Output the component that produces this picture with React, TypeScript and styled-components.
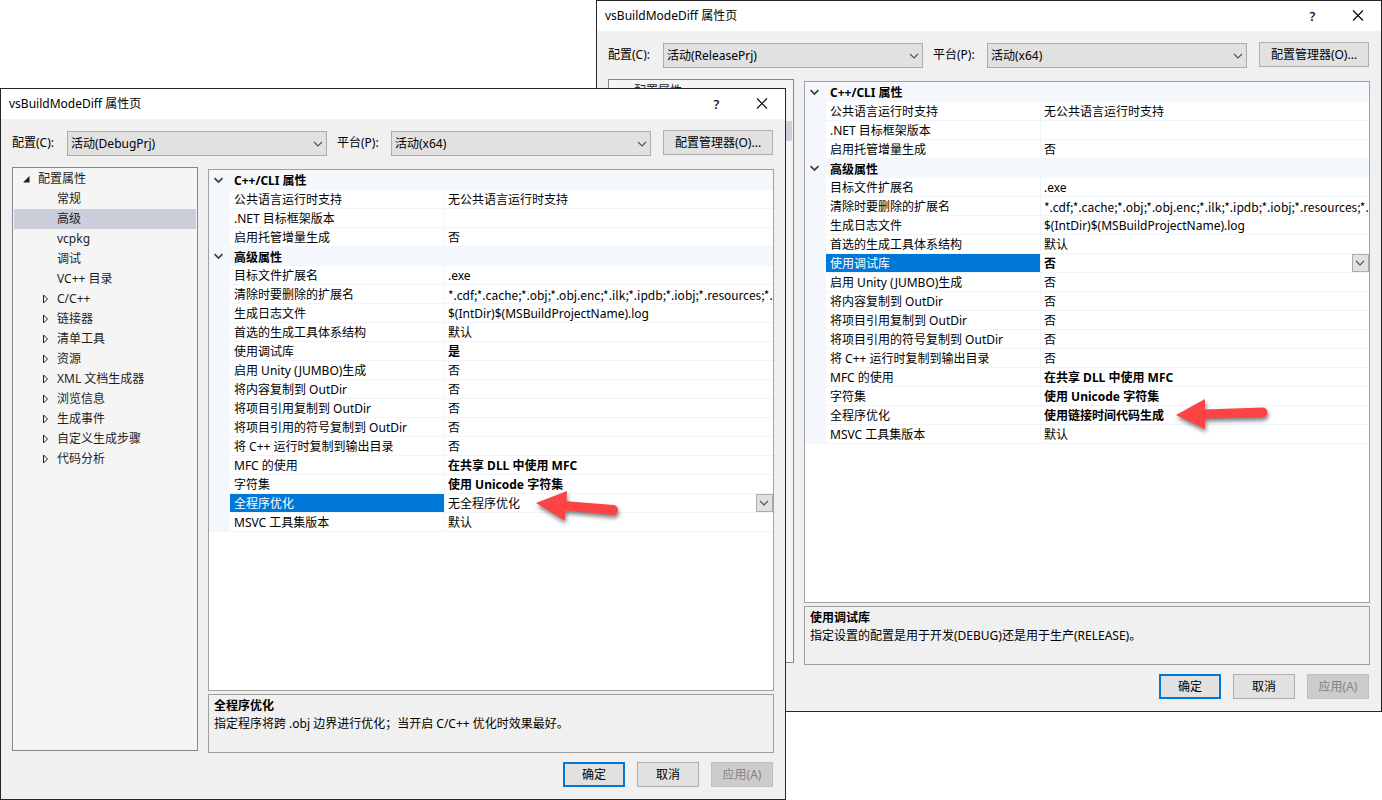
import React, { useId } from "react";
import styled, { createGlobalStyle, css } from "styled-components";

const GlobalStyle = createGlobalStyle`
  * { box-sizing: border-box; }
  body {
    margin: 0;
    background: #ffffff;
    color: #000000;
    font: 12px/18px "Noto Sans", "Noto Sans CJK SC", sans-serif;
  }
  button, select { font: inherit; color: inherit; }
`;

const Desktop = styled.div`
  display: grid;
  min-height: 100vh;
  align-items: start;
`;

const Dialog = styled.section<{ $front?: boolean }>`
  grid-area: 1 / 1;
  width: calc(50% + 95px);
  min-width: 600px;
  justify-self: ${(p) => (p.$front ? "start" : "end")};
  margin-top: ${(p) => (p.$front ? 88 : 0)}px;
  border: 1px solid #262626;
  background: #f0f0f0;
`;

const TitleBar = styled.header`
  display: flex;
  height: 30px;
  align-items: center;
  padding: 0 1px 0 8px;
  background: #ffffff;
`;

const Title = styled.h1`
  flex: 1;
  margin: 0;
  font-size: 12px;
  font-weight: 400;
`;

const TitleButton = styled.button`
  display: grid;
  place-items: center;
  width: 45px;
  height: 30px;
  padding: 0;
  border: 0;
  background: transparent;
  font-size: 13px;
  font-weight: 500;
`;

const Toolbar = styled.div`
  display: flex;
  align-items: center;
  padding: 11px 12px 12px 11px;
`;

const FieldLabel = styled.label`
  flex: none;
  width: 55px;
`;

const PlatformLabel = styled(FieldLabel)`
  width: 54px;
  margin-left: 10px;
`;

const Combo = styled.div`
  display: grid;
  flex: 1;
  min-width: 0;
  margin-top: 1px;
  margin-bottom: -1px;
  align-items: center;
`;

const ComboSelect = styled.select`
  grid-area: 1 / 1;
  width: 100%;
  height: 25px;
  padding: 0 20px 0 3px;
  appearance: none;
  border: 1px solid #acacac;
  border-radius: 0;
  background: #e1e1e1;
`;

const ComboIcon = styled.span`
  display: grid;
  grid-area: 1 / 1;
  justify-self: end;
  margin-right: 3px;
  pointer-events: none;
`;

const PushButton = styled.button<{ $kind?: "default" | "wide" }>`
  width: ${(p) => (p.$kind === "wide" ? 110 : 62)}px;
  height: 25px;
  padding: 0;
  border: 1px solid #adadad;
  background: #e1e1e1;
  ${(p) => p.$kind === "wide" && css`margin-left: 12px;`}
  ${(p) => p.$kind === "default" && css`border: 2px solid #0078d7;`}
  &:disabled {
    border-color: #bfbfbf;
    background: #cccccc;
    color: #838383;
  }
`;

const Main = styled.main`
  display: flex;
  gap: 10px;
  padding: 0 11px;
`;

const TreePanel = styled.ul`
  flex: none;
  width: 186px;
  margin: 0 0 2px;
  padding: 1px;
  border: 1px solid #828790;
  background: #f5f5f5;
  color: #1e1e1e;
  list-style: none;
`;

const TreeItem = styled.li<{ $root?: boolean; $selected?: boolean }>`
  display: grid;
  grid-template-columns: ${(p) => (p.$root ? 16 : 15)}px 1fr;
  align-items: center;
  height: 20px;
  padding-left: ${(p) => (p.$root ? 8 : 28)}px;
  background: ${(p) => (p.$selected ? "#cccedb" : "transparent")};
`;

const TreeText = styled.span`
  grid-column: 2;
`;

const Details = styled.div`
  display: flex;
  flex: 1;
  flex-direction: column;
  gap: 3px;
  min-width: 0;
  margin-top: 2px;
`;

const PropertyFrame = styled.div`
  min-height: 522px;
  overflow: hidden;
  border: 1px solid #a0a0a0;
  background: #ffffff;
`;

const PropertyTable = styled.table`
  width: 100%;
  table-layout: fixed;
  border-collapse: separate;
  border-spacing: 0;
  line-height: 17px;
  text-align: left;
`;

const GutterCol = styled.col`width: 21px;`;
const NameCol = styled.col`width: 214px;`;

const Gutter = styled.td`
  padding: 0 0 0 5px;
  background: #f4f7fc;
`;

const GroupRow = styled.tr<{ $first?: boolean }>`
  height: ${(p) => (p.$first ? 20 : 19)}px;
`;

const GroupHead = styled.th`
  padding: 1px 0 0 4px;
  background: #f4f7fc;
  font-weight: 700;
`;

const NameCell = styled.th<{ $active: boolean }>`
  height: 19px;
  padding: 1px 0 0 4px;
  border-bottom: 1px solid #f0f5fb;
  background: ${(p) => (p.$active ? "#0078d7" : "#ffffff")};
  background-clip: padding-box;
  color: ${(p) => (p.$active ? "#ffffff" : "#000000")};
  font-weight: 400;
  white-space: nowrap;
`;

const ValueCell = styled.td<{ $strong: boolean }>`
  position: relative;
  height: 19px;
  padding: 0 0 0 3px;
  border-bottom: 1px solid #f0f5fb;
  border-left: 1px solid #f0f5fb;
  font-weight: ${(p) => (p.$strong ? 700 : 400)};
  white-space: nowrap;
`;

const ValueText = styled.div`
  overflow: hidden;
  height: 18px;
  padding-top: 1px;
`;

const PatternText = styled(ValueText)`
  font-family: "Noto Sans CJK SC", sans-serif;
`;

const CellEditor = styled.div`
  display: grid;
  align-items: center;
`;

const CellSelect = styled.select`
  grid-area: 1 / 1;
  width: 100%;
  height: 18px;
  padding: 1px 0 0;
  appearance: none;
  border: 0;
  background: transparent;
`;

const CellDrop = styled.span`
  display: grid;
  grid-area: 1 / 1;
  justify-self: end;
  place-items: center;
  width: 17px;
  height: 18px;
  border: 1px solid #acacac;
  background: #e1e1e1;
  pointer-events: none;
`;

const Marker = styled.svg<{ $left: number; $top: number }>`
  position: absolute;
  z-index: 1;
  top: ${(p) => p.$top}px;
  left: ${(p) => p.$left}px;
  overflow: visible;
  filter: drop-shadow(1px 3px 2px rgba(0, 0, 0, 0.5));
  pointer-events: none;
`;

const Description = styled.div`
  min-height: 59px;
  padding: 2px 5px;
  border: 1px solid #a0a0a0;
`;

const DescriptionTitle = styled.h2`
  margin: 0;
  font-size: 12px;
  font-weight: 700;
`;

const DescriptionText = styled.p`
  margin: 0;
`;

const Footer = styled.footer`
  display: flex;
  justify-content: flex-end;
  gap: 12px;
  padding: 9px 12px 12px;
`;

const ComboChevron = () => (
  <svg width="11" height="8" viewBox="0 0 11 8" fill="none" stroke="#505050" strokeWidth="1.1">
    <path d="M1 2 L5 6 L9 2" />
  </svg>
);

const GroupChevronSvg = styled.svg`
  display: block;
`;

const GroupChevron = () => (
  <GroupChevronSvg width="9" height="7" viewBox="0 0 9 7" fill="none" stroke="#3c3c3c" strokeWidth="1.7">
    <path d="M0.6 1.2 L4.5 5 L8.4 1.2" />
  </GroupChevronSvg>
);

const CloseIcon = () => (
  <svg width="12" height="12" viewBox="0 0 12 12" fill="none" stroke="#000" strokeWidth="1.1">
    <path d="M1 0.5 L11 10.5 M11 0.5 L1 10.5" />
  </svg>
);

const OpenNode = () => (
  <svg width="8" height="8" viewBox="0 0 8 8">
    <path d="M7.5 1 V7.5 H1 Z" fill="#1e1e1e" />
  </svg>
);

const ClosedNode = () => (
  <svg width="8" height="10" viewBox="0 0 8 10" fill="none" stroke="#1e1e1e">
    <path d="M1.5 1 V9 L5.5 5 Z" />
  </svg>
);

type TreeNode = { text: string; branch?: boolean };

const tree: TreeNode[] = [
  { text: "常规" },
  { text: "高级" },
  { text: "vcpkg" },
  { text: "调试" },
  { text: "VC++ 目录" },
  { text: "C/C++", branch: true },
  { text: "链接器", branch: true },
  { text: "清单工具", branch: true },
  { text: "资源", branch: true },
  { text: "XML 文档生成器", branch: true },
  { text: "浏览信息", branch: true },
  { text: "生成事件", branch: true },
  { text: "自定义生成步骤", branch: true },
  { text: "代码分析", branch: true },
];

type Property = { name: string; value: string; strong?: boolean };

const cliProperties: Property[] = [
  { name: "公共语言运行时支持", value: "无公共语言运行时支持" },
  { name: ".NET 目标框架版本", value: "" },
  { name: "启用托管增量生成", value: "否" },
];

const advancedProperties = (debugLibs: string, optimization: Property): Property[] => [
  { name: "目标文件扩展名", value: ".exe" },
  { name: "清除时要删除的扩展名", value: "*.cdf;*.cache;*.obj;*.obj.enc;*.ilk;*.ipdb;*.iobj;*.resources;*." },
  { name: "生成日志文件", value: "$(IntDir)$(MSBuildProjectName).log" },
  { name: "首选的生成工具体系结构", value: "默认" },
  { name: "使用调试库", value: debugLibs, strong: true },
  { name: "启用 Unity (JUMBO)生成", value: "否" },
  { name: "将内容复制到 OutDir", value: "否" },
  { name: "将项目引用复制到 OutDir", value: "否" },
  { name: "将项目引用的符号复制到 OutDir", value: "否" },
  { name: "将 C++ 运行时复制到输出目录", value: "否" },
  { name: "MFC 的使用", value: "在共享 DLL 中使用 MFC", strong: true },
  { name: "字符集", value: "使用 Unicode 字符集", strong: true },
  optimization,
  { name: "MSVC 工具集版本", value: "默认" },
];

type DialogProps = {
  front?: boolean;
  configuration: string;
  properties: Property[];
  active: string;
  description: string;
  marker: React.ReactNode;
};

function PropertyRow({ item, active, marker }: { item: Property; active: boolean; marker?: React.ReactNode }) {
  const Text = item.value.startsWith("*") ? PatternText : ValueText;
  return (
    <tr>
      <Gutter />
      <NameCell scope="row" $active={active}>{item.name}</NameCell>
      <ValueCell $strong={!!item.strong}>
        {active ? (
          <CellEditor>
            <CellSelect aria-label={item.name} defaultValue={item.value}>
              <option>{item.value}</option>
            </CellSelect>
            <CellDrop><ComboChevron /></CellDrop>
          </CellEditor>
        ) : (
          <Text>{item.value}</Text>
        )}
        {marker}
      </ValueCell>
    </tr>
  );
}

function PropertyDialog({ front, configuration, properties, active, description, marker }: DialogProps) {
  const id = useId();
  return (
    <Dialog $front={front}>
      <TitleBar>
        <Title>vsBuildModeDiff 属性页</Title>
        <TitleButton>?</TitleButton>
        <TitleButton aria-label="关闭"><CloseIcon /></TitleButton>
      </TitleBar>
      <Toolbar>
        <FieldLabel htmlFor={`${id}-config`}>配置(C):</FieldLabel>
        <Combo>
          <ComboSelect id={`${id}-config`}><option>{configuration}</option></ComboSelect>
          <ComboIcon><ComboChevron /></ComboIcon>
        </Combo>
        <PlatformLabel htmlFor={`${id}-platform`}>平台(P):</PlatformLabel>
        <Combo>
          <ComboSelect id={`${id}-platform`}><option>活动(x64)</option></ComboSelect>
          <ComboIcon><ComboChevron /></ComboIcon>
        </Combo>
        <PushButton $kind="wide">配置管理器(O)...</PushButton>
      </Toolbar>
      <Main>
        <TreePanel>
          <TreeItem $root><OpenNode /><TreeText>配置属性</TreeText></TreeItem>
          {tree.map((node) => (
            <TreeItem key={node.text} $selected={node.text === "高级"}>
              {node.branch && <ClosedNode />}
              <TreeText>{node.text}</TreeText>
            </TreeItem>
          ))}
        </TreePanel>
        <Details>
          <PropertyFrame>
            <PropertyTable>
              <colgroup><GutterCol /><NameCol /><col /></colgroup>
              <tbody>
                <GroupRow $first>
                  <Gutter><GroupChevron /></Gutter>
                  <GroupHead colSpan={2}>C++/CLI 属性</GroupHead>
                </GroupRow>
                {cliProperties.map((item) => (
                  <PropertyRow key={item.name} item={item} active={false} />
                ))}
                <GroupRow>
                  <Gutter><GroupChevron /></Gutter>
                  <GroupHead colSpan={2}>高级属性</GroupHead>
                </GroupRow>
                {properties.map((item) => (
                  <PropertyRow
                    key={item.name}
                    item={item}
                    active={item.name === active}
                    marker={item.name === "全程序优化" ? marker : undefined}
                  />
                ))}
              </tbody>
            </PropertyTable>
          </PropertyFrame>
          <Description>
            <DescriptionTitle>{active}</DescriptionTitle>
            <DescriptionText>{description}</DescriptionText>
          </Description>
        </Details>
      </Main>
      <Footer>
        <PushButton $kind="default">确定</PushButton>
        <PushButton>取消</PushButton>
        <PushButton disabled>应用(A)</PushButton>
      </Footer>
    </Dialog>
  );
}

export default function App() {
  return (
    <>
      <GlobalStyle />
      <Desktop>
        <PropertyDialog
          configuration="活动(ReleasePrj)"
          properties={advancedProperties("否", { name: "全程序优化", value: "使用链接时间代码生成", strong: true })}
          active="使用调试库"
          description="指定设置的配置是用于开发(DEBUG)还是用于生产(RELEASE)。"
          marker={
            <Marker $left={135} $top={-7} width="92" height="30" viewBox="0 0 92 30" fill="#fc4444">
              <path d="M0 16 L29 0 V10.5 L86.5 8.5 A5 5 0 0 1 86.5 18.5 L29 19.5 V30 Z" />
            </Marker>
          }
        />
        <PropertyDialog
          front
          configuration="活动(DebugPrj)"
          properties={advancedProperties("是", { name: "全程序优化", value: "无全程序优化" })}
          active="全程序优化"
          description="指定程序将跨 .obj 边界进行优化；当开启 C/C++ 优化时效果最好。"
          marker={
            <Marker $left={91} $top={-3} width="82" height="30" viewBox="0 0 82 30" fill="#fc4444">
              <path d="M0 12 L31 0 L30.3 10.3 L77.5 14 A5 5 0 0 1 76.5 24 L29.5 19.6 L28.7 29.5 Z" />
            </Marker>
          }
        />
      </Desktop>
    </>
  );
}
